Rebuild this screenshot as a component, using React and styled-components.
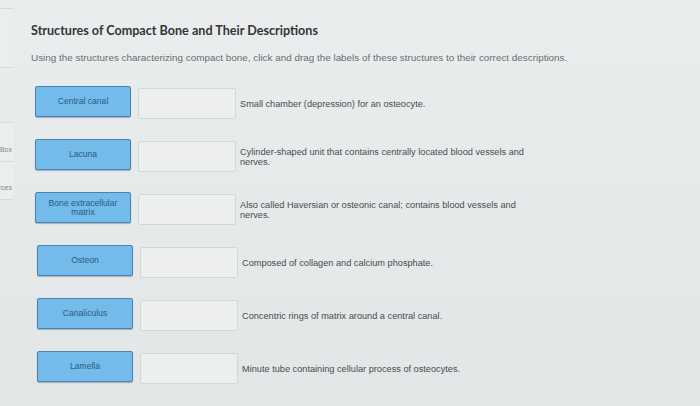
import React from "react"
import styled, { createGlobalStyle } from "styled-components"

const Global = createGlobalStyle`
  html, body {
    margin: 0;
    padding: 0;
    background: #e7eaea;
  }
  body {
    font-family: "Liberation Sans", Arial, sans-serif;
  }
`

const Page = styled.div`
  width: 700px;
  height: 406px;
  display: flex;
  overflow: hidden;
  background: linear-gradient(180deg, #eaeded 0%, #e6e9e9 60%, #e3e6e6 100%);
`

const Sidebar = styled.aside`
  width: 14px;
  flex: none;
  overflow: hidden;
  display: flex;
  flex-direction: column;
  padding-top: 8px;
`

const SideCard = styled.div`
  width: 80px;
  margin-left: -67px;
  border: 1px solid #d8dcdc;
  border-radius: 3px;
  background: #ebeeee;
  height: ${p => p.h}px;
  margin-top: ${p => p.mt || 0}px;
  display: flex;
  flex-direction: column;
`

const SideItem = styled.div`
  flex: 1;
  display: flex;
  align-items: flex-end;
  justify-content: flex-end;
  padding: 0 2px 8px 0;
  font-size: 7px;
  color: #888;
  & + & {
    border-top: 1px solid #d8dcdc;
  }
`

const Main = styled.main`
  flex: 1;
  padding: 23px 0 0 17px;
`

const Title = styled.h2`
  margin: 0;
  font-family: Lato, "Open Sans", sans-serif;
  font-weight: 700;
  font-size: 12.6px;
  color: #333537;
`

const Intro = styled.p`
  margin: 14px 0 0;
  font-size: 9.9px;
  color: #6a6d70;
`

const Rows = styled.div`
  margin-top: 23px;
  display: flex;
  flex-direction: column;
  gap: 22px;
`

const Row = styled.div`
  display: flex;
  align-items: center;
  height: 31px;
`

const Label = styled.div`
  width: 96px;
  height: 31px;
  margin-left: ${p => p.shift || 4}px;
  box-sizing: border-box;
  background: #72bbea;
  border: 1px solid #4a83ad;
  border-radius: 2px;
  box-shadow: 0 1px 1px rgba(40, 70, 100, 0.35);
  display: flex;
  align-items: center;
  justify-content: center;
  text-align: center;
  font-size: 8.6px;
  line-height: 9px;
  color: #2c5b82;
  padding: 0 6px;
`

const Drop = styled.div`
  width: 98px;
  height: 31px;
  margin-left: 7px;
  margin-top: 3px;
  box-sizing: border-box;
  border: 1px solid #d3d7d8;
  border-radius: 2px;
  background: #eceeef;
`

const Desc = styled.div`
  margin-left: 4px;
  margin-top: 5px;
  width: 284px;
  font-size: 9.2px;
  line-height: 10px;
  color: #484b4f;
`

const items = [
  ["Central canal", "Small chamber (depression) for an osteocyte."],
  ["Lacuna", "Cylinder-shaped unit that contains centrally located blood vessels and nerves."],
  ["Bone extracellular matrix", "Also called Haversian or osteonic canal; contains blood vessels and nerves."],
  ["Osteon", "Composed of collagen and calcium phosphate."],
  ["Canaliculus", "Concentric rings of matrix around a central canal."],
  ["Lamella", "Minute tube containing cellular process of osteocytes."],
]

export default function App() {
  return (
    <Page>
      <Global />
      <Sidebar>
        <SideCard h={58} />
        <SideCard h={76} mt={54}>
          <SideItem>Box</SideItem>
          <SideItem>Resources</SideItem>
        </SideCard>
      </Sidebar>
      <Main>
        <Title>Structures of Compact Bone and Their Descriptions</Title>
        <Intro>
          Using the structures characterizing compact bone, click and drag the labels of these structures to their correct descriptions.
        </Intro>
        <Rows>
          {items.map(([label, desc], i) => (
            <Row key={label}>
              <Label shift={i > 2 ? 6 : 4}>{label}</Label>
              <Drop />
              <Desc>{desc}</Desc>
            </Row>
          ))}
        </Rows>
      </Main>
    </Page>
  )
}
